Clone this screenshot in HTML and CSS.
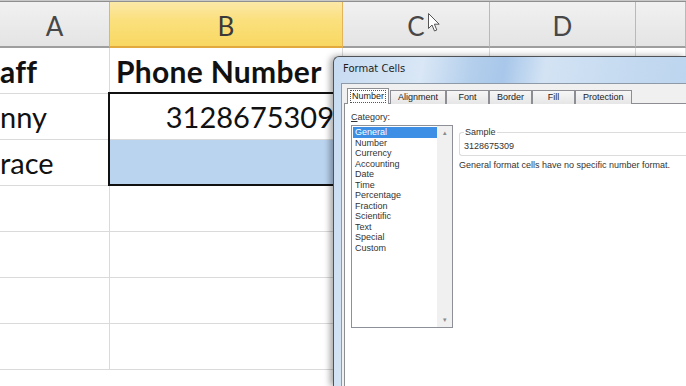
FILE: index.html
```html
<!DOCTYPE html>
<html>
<head>
    <title>Format Cells</title>
    <link rel="stylesheet" href="styles.css">
</head>
<body>
    <div class="sheet">
        <div class="topbar"></div>
        <div class="grid">
            <div class="hdr">A</div>
            <div class="hdr hdr-active">B</div>
            <div class="hdr">C</div>
            <div class="hdr">D</div>
            <div class="hdr"></div>

            <div class="cell bold">aff</div>
            <div class="cell bold">Phone Number</div>
            <div class="cell"></div><div class="cell"></div><div class="cell"></div>

            <div class="cell">nny</div>
            <div class="cell num">3128675309</div>
            <div class="cell"></div><div class="cell"></div><div class="cell"></div>

            <div class="cell">race</div>
            <div class="cell picked"></div>
            <div class="cell"></div><div class="cell"></div><div class="cell"></div>

            <div class="cell"></div><div class="cell"></div><div class="cell"></div><div class="cell"></div><div class="cell"></div>
            <div class="cell"></div><div class="cell"></div><div class="cell"></div><div class="cell"></div><div class="cell"></div>
            <div class="cell"></div><div class="cell"></div><div class="cell"></div><div class="cell"></div><div class="cell"></div>
            <div class="cell"></div><div class="cell"></div><div class="cell"></div><div class="cell"></div><div class="cell"></div>
        </div>
        <div class="selection"></div>
    </div>

    <svg class="cursor" width="13" height="20" viewBox="0 0 13 20">
        <path d="M0.5 0.5 L0.5 15.5 L4 12 L6.5 18 L8.8 17 L6.4 11.2 L11.2 11.2 Z" fill="#fff" stroke="#555" stroke-width="1"/>
    </svg>

    <div class="dialog">
        <div class="dialog-title">Format Cells</div>
        <div class="dialog-body">
            <div class="tabs">
                <div class="tab tab-on"><span class="focus">Number</span></div>
                <div class="tab">Alignment</div>
                <div class="tab">Font</div>
                <div class="tab">Border</div>
                <div class="tab">Fill</div>
                <div class="tab">Protection</div>
            </div>
            <div class="panel">
                <div class="category">
                    <div class="label"><u>C</u>ategory:</div>
                    <div class="listbox">
                        <div class="items">
                            <div class="item item-on">General</div>
                            <div class="item">Number</div>
                            <div class="item">Currency</div>
                            <div class="item">Accounting</div>
                            <div class="item">Date</div>
                            <div class="item">Time</div>
                            <div class="item">Percentage</div>
                            <div class="item">Fraction</div>
                            <div class="item">Scientific</div>
                            <div class="item">Text</div>
                            <div class="item">Special</div>
                            <div class="item">Custom</div>
                        </div>
                        <div class="scroll">
                            <span class="arrow">&#9652;</span>
                            <span class="arrow">&#9662;</span>
                        </div>
                    </div>
                </div>
                <div class="details">
                    <fieldset class="sample">
                        <legend>Sample</legend>
                        <div>3128675309</div>
                    </fieldset>
                    <div class="note">General format cells have no specific number format.</div>
                </div>
            </div>
        </div>
    </div>
</body>
</html>
```

FILE: styles.css
```css
body {
    margin: 0;
    width: 686px;
    height: 386px;
    overflow: hidden;
    position: relative;
    background: #fff;
    font-family: "Liberation Sans", Arial, sans-serif;
}
.sheet {
    position: relative;
    height: 386px;
    overflow: hidden;
}
.topbar {
    height: 1px;
    background: #c8c8c8;
    border-bottom: 1px solid #8f8f8f;
}
.grid {
    display: grid;
    grid-template-columns: 110px 233px 147px 146px 1fr;
    grid-template-rows: 46px;
    grid-auto-rows: 46px;
}
.hdr {
    box-sizing: border-box;
    background: linear-gradient(#f1f1f1, #e4e4e4);
    border-right: 1px solid #b9b9b9;
    border-bottom: 2px solid #9e9e9e;
    color: #474747;
    font-family: Lato, "Open Sans", sans-serif;
    font-size: 26px;
    display: flex;
    align-items: center;
    justify-content: center;
    padding-top: 3px;
}
.hdr-active {
    background: linear-gradient(#fbe9a8, #fbe07e 40%, #f8d862);
    border-right-color: #e3b45a;
    border-bottom-color: #e2a93f;
    color: #3a3a3a;
}
.cell {
    box-sizing: border-box;
    border-right: 1px solid #dadada;
    border-bottom: 1px solid #dadada;
    font-family: Lato, "Open Sans", sans-serif;
    font-size: 29px;
    color: #111;
    display: flex;
    align-items: center;
    overflow: hidden;
    white-space: nowrap;
}
.cell:nth-child(5n+2) {
    padding-left: 6px;
}
.bold {
    font-weight: bold;
    font-size: 30px;
    letter-spacing: 0.3px;
}
.num {
    justify-content: flex-end;
    padding-right: 8px;
}
.picked {
    background: #bad3ef;
}
.selection {
    position: absolute;
    left: 108px;
    top: 92px;
    width: 250px;
    height: 90px;
    border: 2px solid #111;
}
.cursor {
    position: absolute;
    left: 428px;
    top: 13px;
}
.dialog {
    position: absolute;
    left: 333px;
    top: 56px;
    width: 353px;
    height: 330px;
    box-sizing: border-box;
    border: 1px solid #4f5358;
    border-right: none;
    border-bottom: none;
    border-radius: 6px 0 0 0;
    background: linear-gradient(100deg, #c7dbf1 0%, #d9e7f6 22%, #b4cfec 34%, #a8c7ea 42%, #d3e3f4 52%, #c3d9f0 75%, #b7d1ee 100%);
    box-shadow: -3px 0 6px rgba(0, 0, 0, 0.35);
    padding-left: 7px;
    overflow: hidden;
}
.dialog-title {
    height: 26px;
    line-height: 24px;
    padding-left: 2px;
    font-family: "DejaVu Sans", sans-serif;
    font-size: 10px;
    color: #1e1e1e;
}
.dialog-body {
    height: 100%;
    background: #f0f0f0;
    border-left: 1px solid #8e9aa8;
    border-top: 1px solid #8e9aa8;
    padding: 5px 0 0 2px;
}
.tabs {
    display: flex;
    align-items: flex-end;
    padding-left: 3px;
    height: 15px;
}
.tab {
    box-sizing: border-box;
    min-width: 43px;
    height: 14px;
    padding: 0 7px;
    border: 1px solid #8c8e94;
    border-bottom: none;
    background: linear-gradient(#f6f6f6, #e6e6e6);
    font-size: 9px;
    line-height: 13px;
    text-align: center;
    color: #222;
}
.tab-on {
    min-width: 41px;
    height: 16px;
    background: #fff;
    padding: 0 2px;
    margin-right: 1px;
    position: relative;
    z-index: 1;
}
.focus {
    display: inline-block;
    border: 1px dotted #555;
    padding: 0 1px;
    line-height: 11px;
    margin-top: 1px;
}
.panel {
    display: flex;
    height: 300px;
    background: #fff;
    border: 1px solid #8c8e94;
    border-right: none;
    margin-top: -1px;
    padding: 8px 0 0 6px;
    font-size: 9px;
    color: #333;
}
.category {
    width: 102px;
}
.label {
    line-height: 10px;
    margin-bottom: 3px;
}
.listbox {
    display: flex;
    height: 201px;
    border: 1px solid #8d9096;
}
.items {
    flex: 1;
    padding: 1px 0 0 1px;
}
.item {
    height: 10.5px;
    line-height: 10.5px;
    padding-left: 2px;
    color: #333;
}
.item-on {
    background: #3d8fe6;
    color: #fff;
}
.scroll {
    width: 15px;
    background: #f0f0f0;
    display: flex;
    flex-direction: column;
    justify-content: space-between;
    align-items: center;
    color: #8a8a8a;
    font-size: 7px;
    padding: 3px 0 3px;
}
.details {
    flex: 1;
    padding-left: 6px;
    padding-top: 15px;
}
.sample {
    margin: 0;
    padding: 4px 4px 4px 4px;
    border: 1px solid #dcdcdc;
    border-right: none;
    border-radius: 3px 0 0 3px;
    color: #333;
}
.sample legend {
    padding: 0 1px;
    margin-left: 0;
}
.note {
    margin-top: 4px;
}
```
